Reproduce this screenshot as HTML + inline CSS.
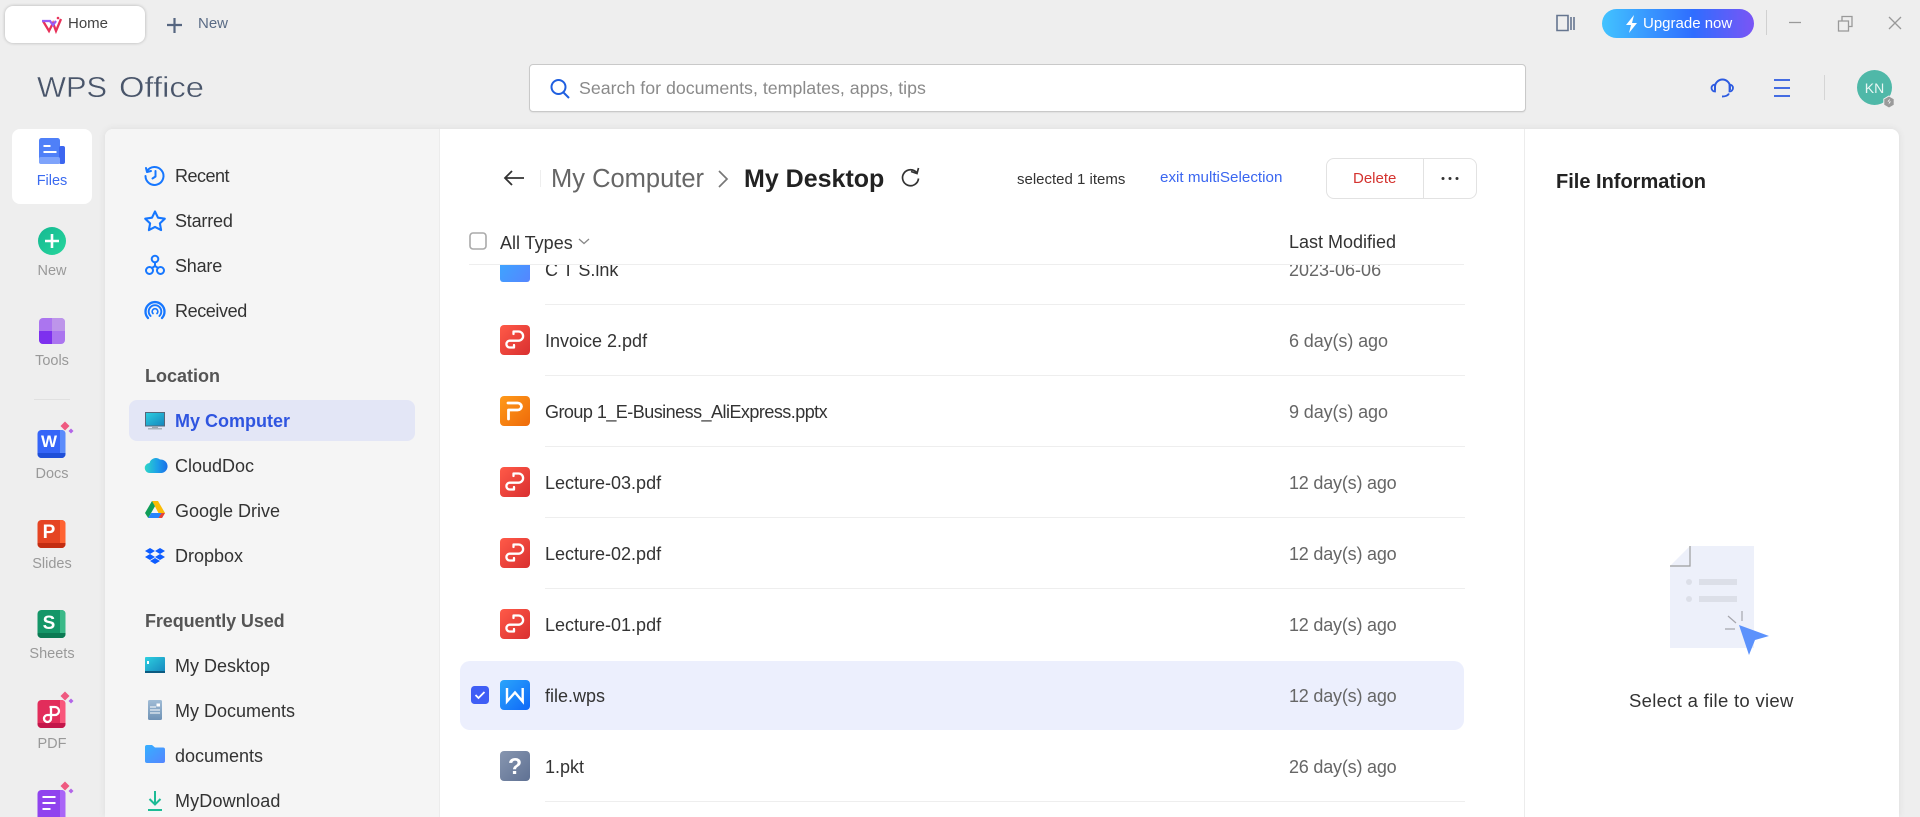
<!DOCTYPE html>
<html><head><meta charset="utf-8"><title>WPS Office</title>
<style>
html,body{margin:0;padding:0;width:1920px;height:817px;overflow:hidden;background:#eeeeee;font-family:"Liberation Sans","Noto Sans CJK SC",sans-serif;color:#333}
#p{position:absolute;left:0;top:0;width:1920px;height:817px;overflow:hidden}
.a{position:absolute}
.t{position:absolute;white-space:nowrap;line-height:24px;font-size:18px;color:#333}
.r{font-size:14.5px;color:#999;width:104px;left:0;text-align:center}
.b{font-weight:bold;color:#555}
.d{left:1289px;color:#666}
.sep{position:absolute;left:545px;width:920px;height:1px;background:#eeeeee}
svg{position:absolute;left:0;top:0}
</style></head><body><div id="p">
<div class="a" style="left:5px;top:6px;width:140px;height:37px;background:#fff;border-radius:8px;box-shadow:0 0 3px rgba(0,0,0,.25)"></div>
<div class="a" style="left:12px;top:129px;width:80px;height:75px;background:#fff;border-radius:8px"></div>
<div class="a" style="left:105px;top:129px;width:1794px;height:688px;background:#fff;border-radius:8px 8px 0 0;box-shadow:0 0 8px rgba(0,0,0,.08);overflow:hidden">
  <div class="a" style="left:0;top:0;width:334px;height:688px;background:#f5f5f5;border-right:1px solid #ececec"></div>
  <div class="a" style="left:1419px;top:0;width:1px;height:688px;background:#ececec"></div>
</div>
<div class="a" style="left:129px;top:400px;width:286px;height:41px;background:#e3e6f6;border-radius:8px"></div>
<div class="a" style="left:460px;top:661px;width:1004px;height:69px;background:#eceffd;border-radius:10px"></div>
<div class="a" style="left:529px;top:64px;width:995px;height:46px;background:#fff;border:1px solid #c9c9c9;border-radius:4px;box-shadow:0 1px 1px rgba(0,0,0,.06)"></div>
<div class="a" style="left:1602px;top:9px;width:152px;height:29px;border-radius:15px;background:linear-gradient(90deg,#42c3ff 0%,#2f6dff 60%,#7a55f5 100%)"></div>
<div class="a" style="left:1326px;top:158px;width:149px;height:39px;background:#fff;border:1px solid #e2e2e2;border-radius:8px"></div>
<div class="a" style="left:1423px;top:158px;width:1px;height:41px;background:#e2e2e2"></div>
<div class="sep" style="top:304px"></div><div class="sep" style="top:375px"></div><div class="sep" style="top:446px"></div><div class="sep" style="top:517px"></div><div class="sep" style="top:588px"></div><div class="sep" style="top:801px"></div>

<svg width="1920" height="817" viewBox="0 0 1920 817" fill="none">
<defs>
<linearGradient id="pdf" x1="0" y1="0" x2="1" y2="1"><stop offset="0" stop-color="#ff5a48"/><stop offset="1" stop-color="#d92f30"/></linearGradient>
<linearGradient id="ppt" x1="0" y1="0" x2="1" y2="1"><stop offset="0" stop-color="#ff9a1a"/><stop offset="1" stop-color="#ee6a0a"/></linearGradient>
<linearGradient id="wps" x1="0" y1="0" x2="1" y2="1"><stop offset="0" stop-color="#2aa5fb"/><stop offset="1" stop-color="#0f68f8"/></linearGradient>
<linearGradient id="unk" x1="0" y1="0" x2="1" y2="1"><stop offset="0" stop-color="#8796b0"/><stop offset="1" stop-color="#5f7193"/></linearGradient>
<linearGradient id="fold" x1="0" y1="0" x2="1" y2="1"><stop offset="0" stop-color="#35b0ff"/><stop offset="1" stop-color="#5585ff"/></linearGradient>
<linearGradient id="scr" x1="0" y1="0" x2="1" y2="1"><stop offset="0" stop-color="#2dd0e0"/><stop offset="1" stop-color="#1685bd"/></linearGradient>
<linearGradient id="cld" x1="0" y1="0" x2="1" y2="0"><stop offset="0" stop-color="#2dd6c8"/><stop offset=".55" stop-color="#1d9fe8"/><stop offset="1" stop-color="#1a6fe8"/></linearGradient>
<linearGradient id="grn" x1="0" y1="0" x2="1" y2="1"><stop offset="0" stop-color="#14b892"/><stop offset="1" stop-color="#27d69c"/></linearGradient>
<linearGradient id="doc" x1="0" y1="0" x2="0" y2="1"><stop offset="0" stop-color="#a0bcd6"/><stop offset="1" stop-color="#6f92b5"/></linearGradient>
<clipPath id="list"><rect x="460" y="265" width="1010" height="60"/></clipPath>
<g id="pdfi"><rect width="30" height="30" rx="4" fill="url(#pdf)"/><path d="M13.500 9V6.500h5a4.600 4.600 0 0 1 0 9.200H9.800a3.400 3.400 0 0 0 0 6.800h4.200v-2.500" stroke="#fff" stroke-width="2.300" stroke-linecap="round" stroke-linejoin="round"/></g>
<g id="spark"><path d="M65 -4.500l4.500 4.500-4.500 4.500-4.500-4.500z" fill="#ef5a80"/><path d="M71 2.500l2.500 2.500-2.500 2.500-2.500-2.500z" fill="#b265e8"/></g>
</defs>

<!-- tab logo -->
<path d="M43 21l6 10 4-8 3 8 5-12" stroke="#e8325a" stroke-width="2.300"/><path d="M42 21h8l3 4 3-4" stroke="#9a5cf5" stroke-width="2.300"/><circle cx="58" cy="18" r="1.300" fill="#e8325a"/>
<path d="M167 25h15M174.500 18v15" stroke="#566680" stroke-width="2.200"/>

<!-- rail icons -->
<rect x="39" y="138" width="21" height="26" rx="2.500" fill="#4f80f8"/><rect x="59" y="146" width="6" height="18" rx="2" fill="#3c66f0"/><rect x="39" y="157" width="21" height="7" rx="2" fill="#7ea3fb"/><path d="M43.500 146h7M43.500 152h13" stroke="#fff" stroke-width="2"/>
<circle cx="52" cy="241" r="14" fill="url(#grn)"/><path d="M45 241h14M52 234v14" stroke="#fff" stroke-width="2.600"/>
<rect x="39" y="318" width="26" height="26" rx="4" fill="#ab75ef"/><path d="M52 318h9a4 4 0 0 1 4 4v9H52z" fill="#bd95ea"/><path d="M39 331h13v13h-9a4 4 0 0 1-4-4z" fill="#7d30ee"/>
<rect x="34" y="399" width="36" height="1" fill="#e0e0e0"/>
<rect x="37.500" y="430" width="28" height="28" rx="4" fill="#3565f8"/><path d="M60 430h1.500a4 4 0 0 1 4 4v20a4 4 0 0 1-4 4H60z" fill="#5b8cfb"/><path d="M37.500 453h28v1a4 4 0 0 1-4 4h-20a4 4 0 0 1-4-4z" fill="#1f4fd8"/>
<g transform="translate(0,426)"><use href="#spark"/></g>
<rect x="37.500" y="520" width="28" height="28" rx="4" fill="#e54423"/><path d="M60 520h1.500a4 4 0 0 1 4 4v20a4 4 0 0 1-4 4H60z" fill="#ff6332"/><path d="M37.500 543h28v1a4 4 0 0 1-4 4h-20a4 4 0 0 1-4-4z" fill="#c32d12"/>
<rect x="37.500" y="610" width="28" height="28" rx="4" fill="#149668"/><path d="M60 610h1.500a4 4 0 0 1 4 4v20a4 4 0 0 1-4 4H60z" fill="#3ab988"/><path d="M37.500 633h28v1a4 4 0 0 1-4 4h-20a4 4 0 0 1-4-4z" fill="#0b7a53"/>
<rect x="37.500" y="700" width="28" height="28" rx="4" fill="#e22d5b"/><path d="M60 700h1.500a4 4 0 0 1 4 4v20a4 4 0 0 1-4 4H60z" fill="#f9567b"/><path d="M37.500 723h28v1a4 4 0 0 1-4 4h-20a4 4 0 0 1-4-4z" fill="#c3164a"/>
<path d="M49.500 707h5.500a4 4 0 0 1 0 8h-7.500a3.500 3.500 0 1 0 3.500 3.500V707" stroke="#fff" stroke-width="2.300"/>
<g transform="translate(0,696)"><use href="#spark"/></g>
<rect x="37.500" y="790" width="28" height="40" rx="4" fill="#9043ee"/><path d="M60 790h1.500a4 4 0 0 1 4 4v36H60z" fill="#a965f7"/><path d="M42.500 797h13M42.500 803h13M42.500 809h8" stroke="#fff" stroke-width="2"/>
<g transform="translate(0,786)"><use href="#spark"/></g>

<!-- nav icons -->
<g stroke="#1677ff" stroke-width="2" stroke-linecap="round" stroke-linejoin="round">
<path d="M147 171a9 9 0 1 1-1.500 5M146 168l1 4 4-1M155.500 171v5.500l-3 2"/>
<path d="M155 211.500l3 6.200 6.800 1-4.900 4.700 1.200 6.700-6.100-3.200-6.100 3.200 1.200-6.700-4.900-4.700 6.800-1z" stroke-width="2.100"/>
<circle cx="155" cy="259" r="3.300"/><circle cx="149.500" cy="270.500" r="3.500"/><circle cx="160.500" cy="270.500" r="3.500"/><path d="M155 262.500v3.500l-3 2M155 266l3 2"/>
<path d="M148 318a9.500 9.500 0 1 1 14 0" stroke-width="2.300"/><path d="M150.600 316a6.300 6.300 0 1 1 8.800 0" stroke-width="1.900"/><path d="M153 313.500a2.800 2.800 0 1 1 4 0" stroke-width="1.700"/>
</g>
<rect x="145.500" y="412.500" width="19" height="13.500" fill="url(#scr)" stroke="#55677a"/><rect x="152" y="426" width="6" height="2" fill="#9aa5b0"/><rect x="148" y="428" width="14" height="1.500" fill="#aab3bc"/>
<path d="M150 473a5 5 0 0 1-.5-10a6.500 6.500 0 0 1 10.500-3.500a6 6 0 0 1 1.500 13.500z" fill="url(#cld)"/>
<path d="M152 501h6l7 12h-6.500z" fill="#fbbc05"/><path d="M152 501l3 5.200-6.800 11.800-3.200-5z" fill="#0f9d58"/><path d="M148.200 518l3-5H165l-3 5z" fill="#2684fc"/><path d="M158.500 518l3-5H165l-3 5z" fill="#ea4335"/>
<path d="M150 548l5 3-5 3-5-3zM160 548l5 3-5 3-5-3zM150 554l5 3-5 3-5-3zM160 554l5 3-5 3-5-3zM155 558l5 3-5 3-5-3z" fill="#0d5cff"/>
<rect x="145" y="657" width="20" height="16" rx="1" fill="url(#scr)"/><rect x="145" y="671" width="20" height="2" fill="#0c5a80"/><rect x="147" y="661" width="2" height="3" fill="#fff"/>
<rect x="148" y="700" width="14" height="20" rx="1.500" fill="url(#doc)"/><path d="M150 707h6M150 710h10M150 713h10" stroke="#fff"/><rect x="156.500" y="703.500" width="3.500" height="3" fill="#fff"/>
<path d="M145 747a2 2 0 0 1 2-2h5l3 2.500h8a2 2 0 0 1 2 2v11.500a2 2 0 0 1-2 2h-16a2 2 0 0 1-2-2z" fill="url(#fold)"/>
<path d="M155 791v13M149.500 799l5.500 5.500 5.500-5.500M148 810h14" stroke="#1dbb95" stroke-width="2"/>

<!-- header -->
<circle cx="558.500" cy="87" r="7" stroke="#1f5fe0" stroke-width="2"/><path d="M563.500 92.500l5.500 5.500" stroke="#1f5fe0" stroke-width="2"/>
<path d="M1557 15.500h11v15h-11zM1571 17v13M1574 17v13" stroke="#65758f" stroke-width="1.600"/>
<path d="M1634 15l-8 10h5l-2 8 8-10h-5z" fill="#fff"/>
<rect x="1766" y="10" width="1" height="25" fill="#d0d0d0"/>
<path d="M1789 22.500h12" stroke="#999" stroke-width="1.300"/>
<path d="M1838.500 21h10v10h-10zM1842 21v-4.500h10v10h-3.500" stroke="#999" stroke-width="1.300"/>
<path d="M1889 17l12 12M1901 17l-12 12" stroke="#999" stroke-width="1.300"/>
<path d="M1715 90v-3a7.500 7.500 0 0 1 15 0v3M1722 96.500c3 0 6-1 7-3" stroke="#2c5ae0" stroke-width="1.900"/><path d="M1715 84.500a3.500 3.500 0 0 0 0 7zM1729.500 84.500a3.500 3.500 0 0 1 0 7z" stroke="#2c5ae0" stroke-width="1.800"/>
<path d="M1774 80h16M1774 88h16M1774 96h16" stroke="#2c5ae0" stroke-width="1.700"/>
<rect x="1824" y="75" width="1" height="25" fill="#d5d5d5"/>
<circle cx="1874.500" cy="87.500" r="17.500" fill="#4fb8a8"/>
<path d="M1889 96l5.200 3v6l-5.200 3-5.200-3v-6z" fill="#9a9a9a" stroke="#eee"/><path d="M1890 98.500l-2.500 3h2l-1 3 2.500-3h-2z" fill="#fff"/>

<!-- main -->
<path d="M505 178h19M512 171l-7 7 7 7" stroke="#333" stroke-width="1.800"/>
<rect x="540" y="170" width="1" height="17" fill="#eee"/>
<path d="M719 171l8 8-8 8" stroke="#777" stroke-width="1.700"/>
<path d="M917 173a8 8 0 1 0 1.500 5.500M911 171.500l6 2 1.500-5.500" stroke="#333" stroke-width="1.700"/>
<circle cx="1443" cy="178.500" r="1.500" fill="#333"/><circle cx="1450" cy="178.500" r="1.500" fill="#333"/><circle cx="1457" cy="178.500" r="1.500" fill="#333"/>
<rect x="470" y="233" width="16" height="16" rx="3" stroke="#aaa" stroke-width="1.600"/>
<path d="M579 239l5 4.500 5-4.500" stroke="#888" stroke-width="1.300"/>
<rect x="469" y="264" width="995" height="1" fill="#eee"/>

<rect x="500" y="240" width="30" height="42" rx="3" fill="url(#fold)" clip-path="url(#list)"/>
<use href="#pdfi" x="500" y="325"/>
<rect x="500" y="396" width="30" height="30" rx="4" fill="url(#ppt)"/><path d="M508 403h9.500a4 4 0 0 1 4 3.500 4 4 0 0 1-4 3.500h-9v9" stroke="#fff" stroke-width="2.800" stroke-linecap="round" stroke-linejoin="round"/>
<use href="#pdfi" x="500" y="467"/><use href="#pdfi" x="500" y="538"/><use href="#pdfi" x="500" y="609"/>
<rect x="471" y="686" width="18" height="18" rx="3.500" fill="#3f5ef5"/><path d="M475.500 695l3 3 6-6" stroke="#fff" stroke-width="1.800"/>
<rect x="500" y="680" width="30" height="30" rx="4" fill="url(#wps)"/><path d="M507 688v13.500l8-9 7.700 9V688" stroke="#fff" stroke-width="2.400"/>
<rect x="500" y="751" width="30" height="30" rx="4" fill="url(#unk)"/>

<!-- right -->
<path d="M1690 546h64v102h-84v-82z" fill="#edf0fa"/><path d="M1690 546v20h-20" stroke="#9d9d9d" stroke-width="1.200"/>
<circle cx="1689" cy="582" r="3" fill="#dcdfe8"/><circle cx="1689" cy="599" r="3" fill="#dcdfe8"/>
<rect x="1699" y="579" width="38" height="6" fill="#dcdfe8"/><rect x="1699" y="596" width="38" height="6" fill="#dcdfe8"/>
<path d="M1742 611v10M1728 616l8 7M1725 629h10" stroke="#a6a6ad" stroke-width="1.200"/>
<path d="M1739 625l30 11-14 4-6 15z" fill="#5c92fc"/>
</svg>

<!-- text -->
<div class="t" style="left:68px;top:12px;font-size:15px;color:#444">Home</div>
<div class="t" style="left:198px;top:12px;font-size:15px;color:#5a6b85">New</div>
<svg width="300" height="110" viewBox="0 0 300 110"><g font-family="Liberation Sans" font-size="29" fill="#49556a" stroke="#eeeeee" stroke-width=".4"><text x="37" y="97" textLength="70" lengthAdjust="spacingAndGlyphs">WPS</text><text x="119" y="97" textLength="85" lengthAdjust="spacingAndGlyphs">Office</text></g></svg>
<div class="t" style="left:579px;top:76px;font-size:17.8px;color:#8a8a8a">Search for documents, templates, apps, tips</div>
<div class="t" style="left:1643px;top:12px;font-size:15px;color:#fff">Upgrade now</div>
<div class="t" style="left:1857px;top:76px;font-size:14px;color:#e8f6f3;width:35px;text-align:center">KN</div>

<div class="t r" style="top:169px;color:#3b6bf0">Files</div>
<div class="t r" style="top:259px">New</div>
<div class="t r" style="top:349px">Tools</div>
<div class="t r" style="top:462px">Docs</div>
<div class="t r" style="top:552px">Slides</div>
<div class="t r" style="top:642px">Sheets</div>
<div class="t r" style="top:732px">PDF</div>
<div class="a" style="left:37px;top:434px;font:bold 17px 'Liberation Sans',sans-serif;color:#fff;line-height:16px;width:24px;text-align:center">W</div>
<div class="a" style="left:37px;top:525px;font:bold 19px 'Liberation Sans',sans-serif;color:#fff;line-height:16px;width:24px;text-align:center">P</div>
<div class="a" style="left:37px;top:616px;font:bold 19px 'Liberation Sans',sans-serif;color:#fff;line-height:16px;width:24px;text-align:center">S</div>

<div class="t" style="left:175px;top:164px;letter-spacing:-.5px">Recent</div>
<div class="t" style="left:175px;top:209px;letter-spacing:-.2px">Starred</div>
<div class="t" style="left:175px;top:254px;letter-spacing:-.2px">Share</div>
<div class="t" style="left:175px;top:299px;letter-spacing:-.4px">Received</div>
<div class="t b" style="left:145px;top:364px">Location</div>
<div class="t" style="left:175px;top:409px;font-weight:bold;color:#2f55e0">My Computer</div>
<div class="t" style="left:175px;top:454px">CloudDoc</div>
<div class="t" style="left:175px;top:499px">Google Drive</div>
<div class="t" style="left:175px;top:544px">Dropbox</div>
<div class="t b" style="left:145px;top:609px;letter-spacing:-.1px">Frequently Used</div>
<div class="t" style="left:175px;top:654px">My Desktop</div>
<div class="t" style="left:175px;top:699px">My Documents</div>
<div class="t" style="left:175px;top:744px">documents</div>
<div class="t" style="left:175px;top:789px;letter-spacing:.15px">MyDownload</div>

<div class="t" style="left:551px;top:167px;font-size:25.5px;color:#666">My Computer</div>
<div class="t" style="left:744px;top:167px;font-size:25px;font-weight:bold;color:#222">My Desktop</div>
<div class="t" style="left:1017px;top:168px;font-size:15px;color:#333">selected 1 items</div>
<div class="t" style="left:1160px;top:166px;font-size:15.2px;color:#3a66f0">exit multiSelection</div>
<div class="t" style="left:1353px;top:167px;font-size:15px;color:#d4332f">Delete</div>
<div class="t" style="left:500px;top:231px">All Types</div>
<div class="t" style="left:1289px;top:230px">Last Modified</div>

<div class="a" style="left:460px;top:265px;width:1000px;height:30px;overflow:hidden">
 <div class="t" style="left:85px;top:-7px">C T S.lnk</div>
 <div class="t" style="left:829px;top:-7px;color:#666">2023-06-06</div>
</div>
<div class="t" style="left:545px;top:329px">Invoice 2.pdf</div><div class="t d" style="top:329px;letter-spacing:-.1px">6 day(s) ago</div>
<div class="t" style="left:545px;top:400px;letter-spacing:-.53px">Group 1_E-Business_AliExpress.pptx</div><div class="t d" style="top:400px;letter-spacing:-.1px">9 day(s) ago</div>
<div class="t" style="left:545px;top:471px">Lecture-03.pdf</div><div class="t d" style="top:471px;letter-spacing:-.2px">12 day(s) ago</div>
<div class="t" style="left:545px;top:542px">Lecture-02.pdf</div><div class="t d" style="top:542px;letter-spacing:-.2px">12 day(s) ago</div>
<div class="t" style="left:545px;top:613px">Lecture-01.pdf</div><div class="t d" style="top:613px;letter-spacing:-.2px">12 day(s) ago</div>
<div class="t" style="left:545px;top:684px">file.wps</div><div class="t d" style="top:684px;letter-spacing:-.2px">12 day(s) ago</div>
<div class="t" style="left:545px;top:755px">1.pkt</div><div class="t d" style="top:755px;letter-spacing:-.2px">26 day(s) ago</div>
<div class="a" style="left:500px;top:751px;width:30px;text-align:center;font:bold 23px/30px 'Liberation Sans',sans-serif;color:#fff">?</div>

<div class="t" style="left:1556px;top:170px;font-size:20px;font-weight:bold;color:#222">File Information</div>
<div class="t" style="left:1629px;top:689px;font-size:18.5px;letter-spacing:.3px;color:#333">Select a file to view</div>
</div></body></html>
